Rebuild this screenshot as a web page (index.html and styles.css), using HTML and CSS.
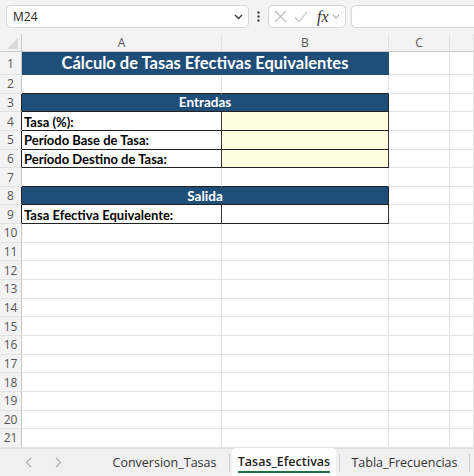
FILE: index.html
```html
<!DOCTYPE html>
<html lang="es">
<head>
    <meta charset="UTF-8">
    <title>Tasas_Efectivas</title>
    <link rel="stylesheet" href="styles.css">
</head>
<body>
    <div class="formula-bar">
        <div class="name-box">
            <span>M24</span>
            <svg width="9" height="6" viewBox="0 0 9 6"><path d="M1 1l3.5 3.5L8 1" fill="none" stroke="#333" stroke-width="1.3"/></svg>
        </div>
        <div class="more">
            <svg width="3" height="11" viewBox="0 0 3 11"><circle cx="1.5" cy="1.5" r="1.2" fill="#444"/><circle cx="1.5" cy="5.5" r="1.2" fill="#444"/><circle cx="1.5" cy="9.5" r="1.2" fill="#444"/></svg>
        </div>
        <div class="fx-box">
            <svg width="13" height="13" viewBox="0 0 13 13"><path d="M1 1l11 11M12 1L1 12" stroke="#bdbdbd" stroke-width="1.1"/></svg>
            <svg width="14" height="12" viewBox="0 0 14 12"><path d="M1 6.5l4 4L13 1" fill="none" stroke="#bdbdbd" stroke-width="1.1"/></svg>
            <span class="fx">fx</span>
            <svg width="8" height="5" viewBox="0 0 8 5"><path d="M1 1l3 3 3-3" fill="none" stroke="#888" stroke-width="1"/></svg>
        </div>
        <div class="formula-input"></div>
    </div>

    <div class="sheet">
        <div class="corner"></div>
        <div class="col-head">A</div>
        <div class="col-head">B</div>
        <div class="col-head">C</div>
        <div class="col-head"></div>

        <div class="row-head">1</div>
        <div class="title">Cálculo de Tasas Efectivas Equivalentes</div>
        <div></div><div></div>

        <div class="row-head">2</div>
        <div class="bt"></div><div class="bt"></div><div></div><div></div>

        <div class="row-head edge">3</div>
        <div class="band">Entradas</div>
        <div></div><div></div>

        <div class="row-head edge">4</div>
        <div class="label boxed">Tasa (%):</div>
        <div class="input boxed"></div>
        <div></div><div></div>

        <div class="row-head edge">5</div>
        <div class="label boxed">Período Base de Tasa:</div>
        <div class="input boxed"></div>
        <div></div><div></div>

        <div class="row-head edge">6</div>
        <div class="label boxed">Período Destino de Tasa:</div>
        <div class="input boxed"></div>
        <div></div><div></div>

        <div class="row-head">7</div>
        <div class="bt"></div><div class="bt"></div><div></div><div></div>

        <div class="row-head edge">8</div>
        <div class="band">Salida</div>
        <div></div><div></div>

        <div class="row-head edge">9</div>
        <div class="label boxed">Tasa Efectiva Equivalente:</div>
        <div class="boxed"></div>
        <div></div><div></div>

        <div class="row-head">10</div><div></div><div></div><div></div><div></div>
        <div class="row-head">11</div><div></div><div></div><div></div><div></div>
        <div class="row-head">12</div><div></div><div></div><div></div><div></div>
        <div class="row-head">13</div><div></div><div></div><div></div><div></div>
        <div class="row-head">14</div><div></div><div></div><div></div><div></div>
        <div class="row-head">15</div><div></div><div></div><div></div><div></div>
        <div class="row-head">16</div><div></div><div></div><div></div><div></div>
        <div class="row-head">17</div><div></div><div></div><div></div><div></div>
        <div class="row-head">18</div><div></div><div></div><div></div><div></div>
        <div class="row-head">19</div><div></div><div></div><div></div><div></div>
        <div class="row-head">20</div><div></div><div></div><div></div><div></div>
        <div class="row-head">21</div><div></div><div></div><div></div><div></div>
    </div>

    <div class="tabs">
        <div class="nav">
            <svg width="7" height="11" viewBox="0 0 7 11"><path d="M6 1L1.5 5.5 6 10" fill="none" stroke="#aaa" stroke-width="1.1"/></svg>
            <svg width="7" height="11" viewBox="0 0 7 11"><path d="M1 1l4.5 4.5L1 10" fill="none" stroke="#aaa" stroke-width="1.1"/></svg>
        </div>
        <div class="tab">Conversion_Tasas</div>
        <div class="sep"></div>
        <div class="tab active"><span>Tasas_Efectivas</span></div>
        <div class="sep"></div>
        <div class="tab">Tabla_Frecuencias</div>
        <div class="sep"></div>
    </div>
</body>
</html>
```

FILE: styles.css
```css
* {
    margin: 0;
    padding: 0;
    box-sizing: border-box;
}

body {
    width: 474px;
    height: 476px;
    overflow: hidden;
    background: #f3f3f3;
    font-family: "Open Sans", sans-serif;
}

/* barra de fórmulas */
.formula-bar {
    height: 34px;
    display: flex;
    align-items: flex-start;
    padding: 5px 0 0 6px;
}

.name-box {
    width: 243px;
    height: 23px;
    background: #fff;
    border: 1px solid #d6d6d6;
    border-radius: 5px;
    display: flex;
    align-items: center;
    justify-content: space-between;
    padding: 0 5px 0 6px;
    font-size: 12px;
    color: #222;
}

.more {
    width: 19px;
    height: 23px;
    display: flex;
    align-items: center;
    justify-content: center;
}

.fx-box {
    width: 78px;
    height: 23px;
    background: #fff;
    border: 1px solid #d6d6d6;
    border-radius: 5px;
    display: flex;
    align-items: center;
    gap: 7px;
    padding-left: 5px;
}

.fx {
    font-family: "Liberation Serif", serif;
    font-style: italic;
    font-size: 16px;
    color: #333;
    margin-left: 2px;
    margin-right: -4px;
}

.formula-input {
    flex: 1;
    height: 23px;
    margin-left: 5px;
    background: #fff;
    border: 1px solid #d6d6d6;
    border-right: none;
    border-radius: 5px 0 0 5px;
}

/* hoja */
.sheet {
    height: 414px;
    overflow: hidden;
    display: grid;
    grid-template-columns: 22px 200px 167px 61px 1fr;
    grid-template-rows: 18px 23px repeat(20, 18.65px);
    background: #fff;
    font-family: Lato, sans-serif;
}

.sheet > div {
    border-right: 1px solid #e2e2e2;
    border-bottom: 1px solid #e2e2e2;
}

.corner,
.col-head,
.row-head {
    background: #f3f3f3;
    color: #555;
    font-family: "Open Sans", sans-serif;
    font-size: 12px;
    display: flex;
    align-items: center;
    justify-content: center;
}

.corner {
    position: relative;
    border-right-color: #c8c8c8 !important;
    border-bottom-color: #c8c8c8 !important;
}

.corner::after {
    content: "";
    position: absolute;
    right: 3px;
    bottom: 2px;
    border-style: solid;
    border-width: 0 0 11px 11px;
    border-color: transparent transparent #d9d9d9 transparent;
}

.col-head {
    border-bottom-color: #c8c8c8 !important;
}

.row-head {
    border-right-color: #c8c8c8 !important;
}

.sheet > .edge {
    border-right-color: #222 !important;
}

.title,
.band {
    grid-column: span 2;
    background: #1f4e79;
    color: #fff;
    font-weight: bold;
    display: flex;
    align-items: center;
    justify-content: center;
}

.title {
    font-size: 16.5px;
    border-color: #1f4e79 !important;
}

.band {
    font-size: 13.5px;
    border-right-color: #222 !important;
    border-bottom-color: #222 !important;
}

.sheet > .bt {
    border-bottom-color: #222;
}

.sheet > .boxed {
    border-right-color: #333;
    border-bottom-color: #222;
}

.label {
    font-weight: bold;
    font-size: 13px;
    color: #000;
    display: flex;
    align-items: center;
    padding: 1px 0 0 2px;
}

.input {
    background: #fffde0;
}

/* pestañas */
.tabs {
    height: 28px;
    display: flex;
    align-items: stretch;
    background: #f0f0f0;
    border-top: 1px solid #dcdcdc;
    font-size: 12.5px;
    color: #333;
}

.nav {
    width: 100px;
    display: flex;
    align-items: center;
    gap: 23px;
    padding-left: 25px;
}

.tab {
    width: 129px;
    display: flex;
    align-items: center;
    justify-content: center;
}

.sep {
    width: 1px;
    margin: 5px 0 4px;
    background: #cfcfcf;
}

.tab.active {
    width: 104px;
    margin: -1px 3px 0 2px;
    background: #fff;
    border-radius: 4px 4px 0 0;
    font-weight: 600;
    color: #222;
}

.tab.active span {
    padding-bottom: 1px;
    border-bottom: 2px solid #1e7145;
    margin-top: 2px;
}
```
